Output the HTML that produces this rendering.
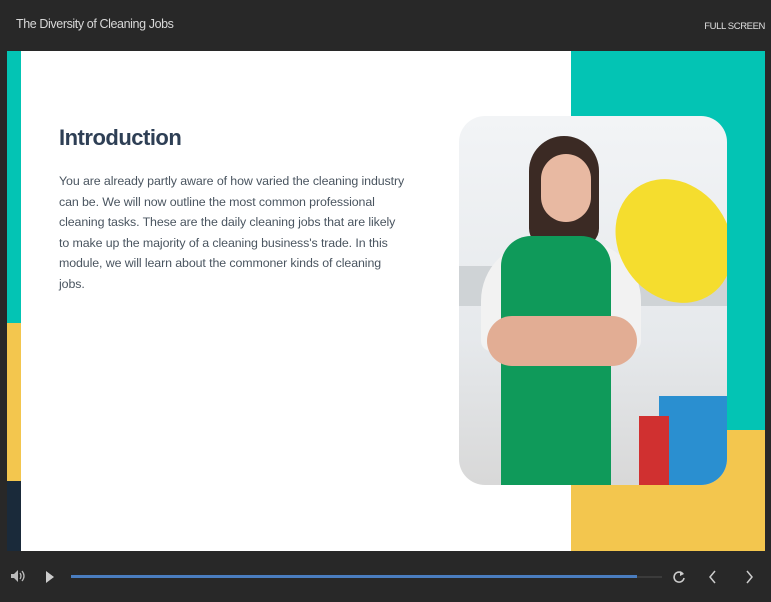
<!DOCTYPE html>
<html><head><meta charset="utf-8"><style>
*{margin:0;padding:0;box-sizing:border-box}
body{width:771px;height:602px;background:#282828;position:relative;overflow:hidden;font-family:"Liberation Sans",sans-serif}
.t{position:absolute;left:16px;top:17px;color:#d8d8d8;font-size:12.5px;letter-spacing:-0.4px}
.fs{position:absolute;right:6px;top:21px;color:#e0e0e0;font-size:9.5px;letter-spacing:-0.4px}
.slide{position:absolute;left:7px;top:51px;width:758px;height:500px;background:#fff;overflow:hidden}
.abs{position:absolute}
h1{position:absolute;left:52px;top:74px;font-size:22px;color:#2e3f55;font-weight:bold;letter-spacing:-0.5px}
p{position:absolute;left:52px;top:120px;width:348px;font-size:12.4px;line-height:20.6px;color:#4a5560;letter-spacing:-0.1px}
</style></head><body>
<div class="t">The Diversity of Cleaning Jobs</div>
<div class="fs">FULL SCREEN</div>
<div class="slide">
 <div class="abs" style="left:0;top:0;width:14px;height:272px;background:#03c4b4"></div>
 <div class="abs" style="left:0;top:272px;width:14px;height:158px;background:#f3c64e"></div>
 <div class="abs" style="left:0;top:430px;width:14px;height:70px;background:#1a2a3a"></div>
 <div class="abs" style="left:564px;top:0;width:194px;height:379px;background:#03c4b4"></div>
 <div class="abs" style="left:564px;top:379px;width:194px;height:121px;background:#f3c64e"></div>
 <h1>Introduction</h1>
 <p>You are already partly aware of how varied the cleaning industry can be. We will now outline the most common professional cleaning tasks. These are the daily cleaning jobs that are likely to make up the majority of a cleaning business's trade. In this module, we will learn about the commoner kinds of cleaning jobs.</p>
 <div class="abs" style="left:452px;top:65px;width:268px;height:369px;border-radius:26px;overflow:hidden;background:linear-gradient(#f2f4f6,#e6e9ec 60%,#d8d8d8)">
  <div class="abs" style="left:0;top:150px;width:268px;height:40px;background:#cfd3d6"></div>
  <div class="abs" style="left:70px;top:20px;width:70px;height:110px;border-radius:40px 40px 20px 20px;background:#3b2a24"></div>
  <div class="abs" style="left:82px;top:38px;width:50px;height:68px;border-radius:25px;background:#e8b9a2"></div>
  <div class="abs" style="left:22px;top:125px;width:160px;height:110px;border-radius:60px 60px 10px 10px;background:#f2f2f2"></div>
  <div class="abs" style="left:42px;top:120px;width:110px;height:249px;border-radius:30px 30px 0 0;background:#0f9a5a"></div>
  <div class="abs" style="left:28px;top:200px;width:150px;height:50px;border-radius:25px;background:#e2ad94"></div>
  <div class="abs" style="left:160px;top:60px;width:110px;height:130px;border-radius:50%;background:#f5dd2e;transform:rotate(-35deg)"></div>
  <div class="abs" style="left:200px;top:280px;width:68px;height:89px;background:#2a8fd0"></div>
  <div class="abs" style="left:180px;top:300px;width:30px;height:69px;background:#d03030"></div>
 </div>
</div>
<svg class="abs" style="left:10px;top:569px" width="16" height="14" viewBox="0 0 16 14"><path d="M1 5h3l4-4v12l-4-4H1z" fill="#bbb"/><path d="M10 4q2 3 0 6M12 2q4 5 0 10" stroke="#bbb" fill="none" stroke-width="1.3"/></svg>
<svg class="abs" style="left:45px;top:571px" width="10" height="12"><path d="M1 0l8 6-8 6z" fill="#ccc"/></svg>
<div class="abs" style="left:71px;top:576px;width:591px;height:2px;background:#3b3b3b"></div>
<div class="abs" style="left:71px;top:575px;width:566px;height:3px;background:#4a7dbf"></div>
<svg class="abs" style="left:673px;top:570px" width="13" height="14" viewBox="0 0 13 14"><path d="M10 4A5 5 0 1 0 11 8" stroke="#ccc" stroke-width="1.6" fill="none"/><path d="M7 1l4 3-4 2z" fill="#ccc"/></svg>
<svg class="abs" style="left:709px;top:570px" width="8" height="14"><path d="M6 1L1 7l5 6" stroke="#ccc" stroke-width="1.5" fill="none"/></svg>
<svg class="abs" style="left:746px;top:570px" width="8" height="14"><path d="M1 1l5 6-5 6" stroke="#ccc" stroke-width="1.5" fill="none"/></svg>
</body></html>
